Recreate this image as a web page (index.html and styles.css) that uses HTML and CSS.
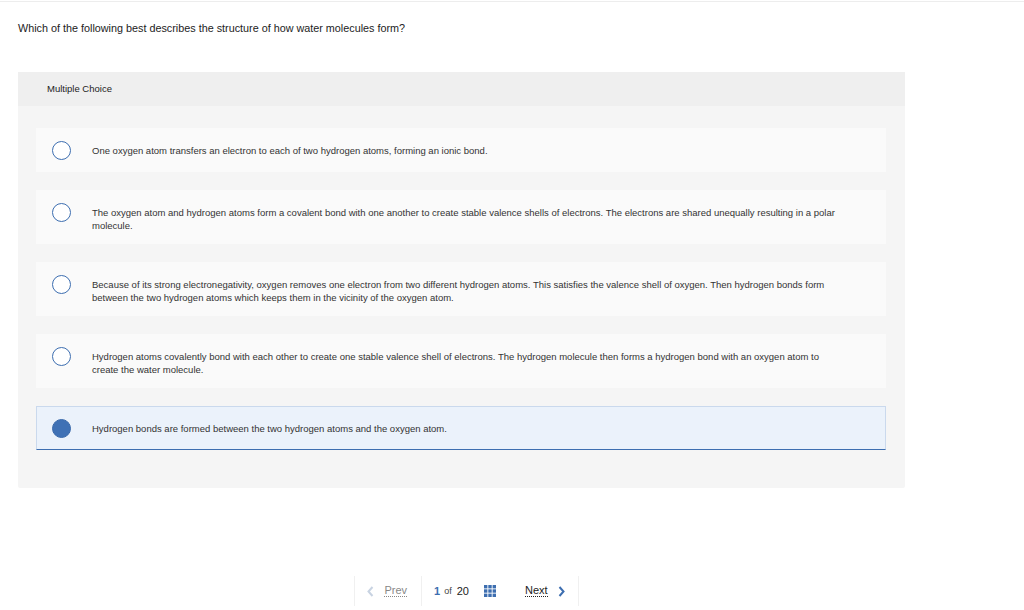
FILE: index.html
```html
<!DOCTYPE html>
<html>
<head>
	<title>Question 1</title>
	<link rel="stylesheet" href="styles.css">
</head>
<body>
	<div class="topline"></div>
	<div class="page">
		<p class="question">Which of the following best describes the structure of how water molecules form?</p>

		<div class="panel">
			<div class="panel-head">Multiple Choice</div>
			<div class="choices">
				<label class="choice">
					<span class="radio"></span>
					<span class="choice-text">One oxygen atom transfers an electron to each of two hydrogen atoms, forming an ionic bond.</span>
				</label>
				<label class="choice">
					<span class="radio"></span>
					<span class="choice-text">The oxygen atom and hydrogen atoms form a covalent bond with one another to create stable valence shells of electrons. The electrons are shared unequally resulting in a polar molecule.</span>
				</label>
				<label class="choice">
					<span class="radio"></span>
					<span class="choice-text">Because of its strong electronegativity, oxygen removes one electron from two different hydrogen atoms. This satisfies the valence shell of oxygen. Then hydrogen bonds form between the two hydrogen atoms which keeps them in the vicinity of the oxygen atom.</span>
				</label>
				<label class="choice">
					<span class="radio"></span>
					<span class="choice-text">Hydrogen atoms covalently bond with each other to create one stable valence shell of electrons. The hydrogen molecule then forms a hydrogen bond with an oxygen atom to create the water molecule.</span>
				</label>
				<label class="choice selected">
					<span class="radio"></span>
					<span class="choice-text">Hydrogen bonds are formed between the two hydrogen atoms and the oxygen atom.</span>
				</label>
			</div>
		</div>

		<div class="pager">
			<div class="pager-box">
				<a class="prev">
					<svg width="7" height="11" viewBox="0 0 7 11"><path d="M5.5 1 L1.5 5.5 L5.5 10" fill="none" stroke="#c8d3e2" stroke-width="2"/></svg>
					<span class="link">Prev</span>
				</a>
				<div class="count">
					<span class="current">1</span>
					<span class="of">of</span>
					<span class="total">20</span>
					<svg class="grid" width="12" height="12" viewBox="0 0 12 12" fill="#3d6eb0">
						<rect x="0" y="0" width="3.4" height="3.4"/><rect x="4.3" y="0" width="3.4" height="3.4"/><rect x="8.6" y="0" width="3.4" height="3.4"/>
						<rect x="0" y="4.3" width="3.4" height="3.4"/><rect x="4.3" y="4.3" width="3.4" height="3.4"/><rect x="8.6" y="4.3" width="3.4" height="3.4"/>
						<rect x="0" y="8.6" width="3.4" height="3.4"/><rect x="4.3" y="8.6" width="3.4" height="3.4"/><rect x="8.6" y="8.6" width="3.4" height="3.4"/>
					</svg>
				</div>
				<a class="next">
					<span class="link">Next</span>
					<svg width="7" height="11" viewBox="0 0 7 11"><path d="M1.5 1 L5.5 5.5 L1.5 10" fill="none" stroke="#3d6eb0" stroke-width="2"/></svg>
				</a>
			</div>
		</div>
	</div>
</body>
</html>
```

FILE: styles.css
```css
body {
	margin: 0;
	font-family: "Liberation Sans", Arial, sans-serif;
	color: #222;
	background: #fff;
}
.topline {
	height: 1px;
	border-bottom: 1px solid #ededed;
}
.page {
	width: 887px;
	padding: 0 18px;
}
.question {
	margin: 18px 0 0;
	font-size: 10.8px;
	line-height: 16px;
}
.panel {
	margin-top: 36px;
	background-color: #f5f5f5;
	border-radius: 2px;
}
.panel-head {
	height: 34px;
	line-height: 34px;
	padding-left: 29px;
	font-size: 9.5px;
	background-color: #efefef;
}
.choices {
	display: flex;
	flex-direction: column;
	gap: 18px;
	padding: 22px 19px 38px 18px;
}
.choice {
	display: flex;
	align-items: flex-start;
	box-sizing: border-box;
	min-height: 44px;
	padding: 16px 45px 12px 16px;
	background-color: #fafafa;
	font-size: 9.5px;
	line-height: 13px;
	color: #333;
}
.radio {
	flex: none;
	width: 17px;
	height: 17px;
	margin: -3px 21px 0 0;
	border: 1px solid #3d6eb0;
	border-radius: 50%;
	background: #fff;
}
.choice.selected {
	padding: 15px 44px 11px 15px;
	background-color: #ebf2fb;
	border: 1px solid #cad9ed;
	border-bottom-color: #3d6eb0;
}
.choice.selected .radio {
	background-color: #3f71b5;
	border-color: #3a6aab;
}
.pager {
	display: flex;
	justify-content: center;
	margin-top: 88px;
}
.pager-box {
	display: flex;
	align-items: center;
	height: 30px;
	margin-left: 10px;
	border-left: 1px solid #f0f0f0;
	border-right: 1px solid #f0f0f0;
	font-size: 11px;
}
.prev {
	display: flex;
	align-items: center;
	gap: 10px;
	height: 30px;
	padding: 0 14px 0 12px;
	border-right: 1px solid #f0f0f0;
	color: #888;
}
.link {
	border-bottom: 1px dotted currentColor;
	line-height: 11px;
}
.count {
	display: flex;
	align-items: center;
	padding-left: 12px;
}
.current {
	color: #3d6eb0;
	font-weight: bold;
}
.of {
	font-size: 9px;
	margin: 0 5px 0 4px;
	color: #444;
}
.total {
	font-size: 11px;
}
.grid {
	margin-left: 15px;
}
.next {
	display: flex;
	align-items: center;
	gap: 10px;
	padding: 0 13px 0 29px;
	color: #222;
}
```
